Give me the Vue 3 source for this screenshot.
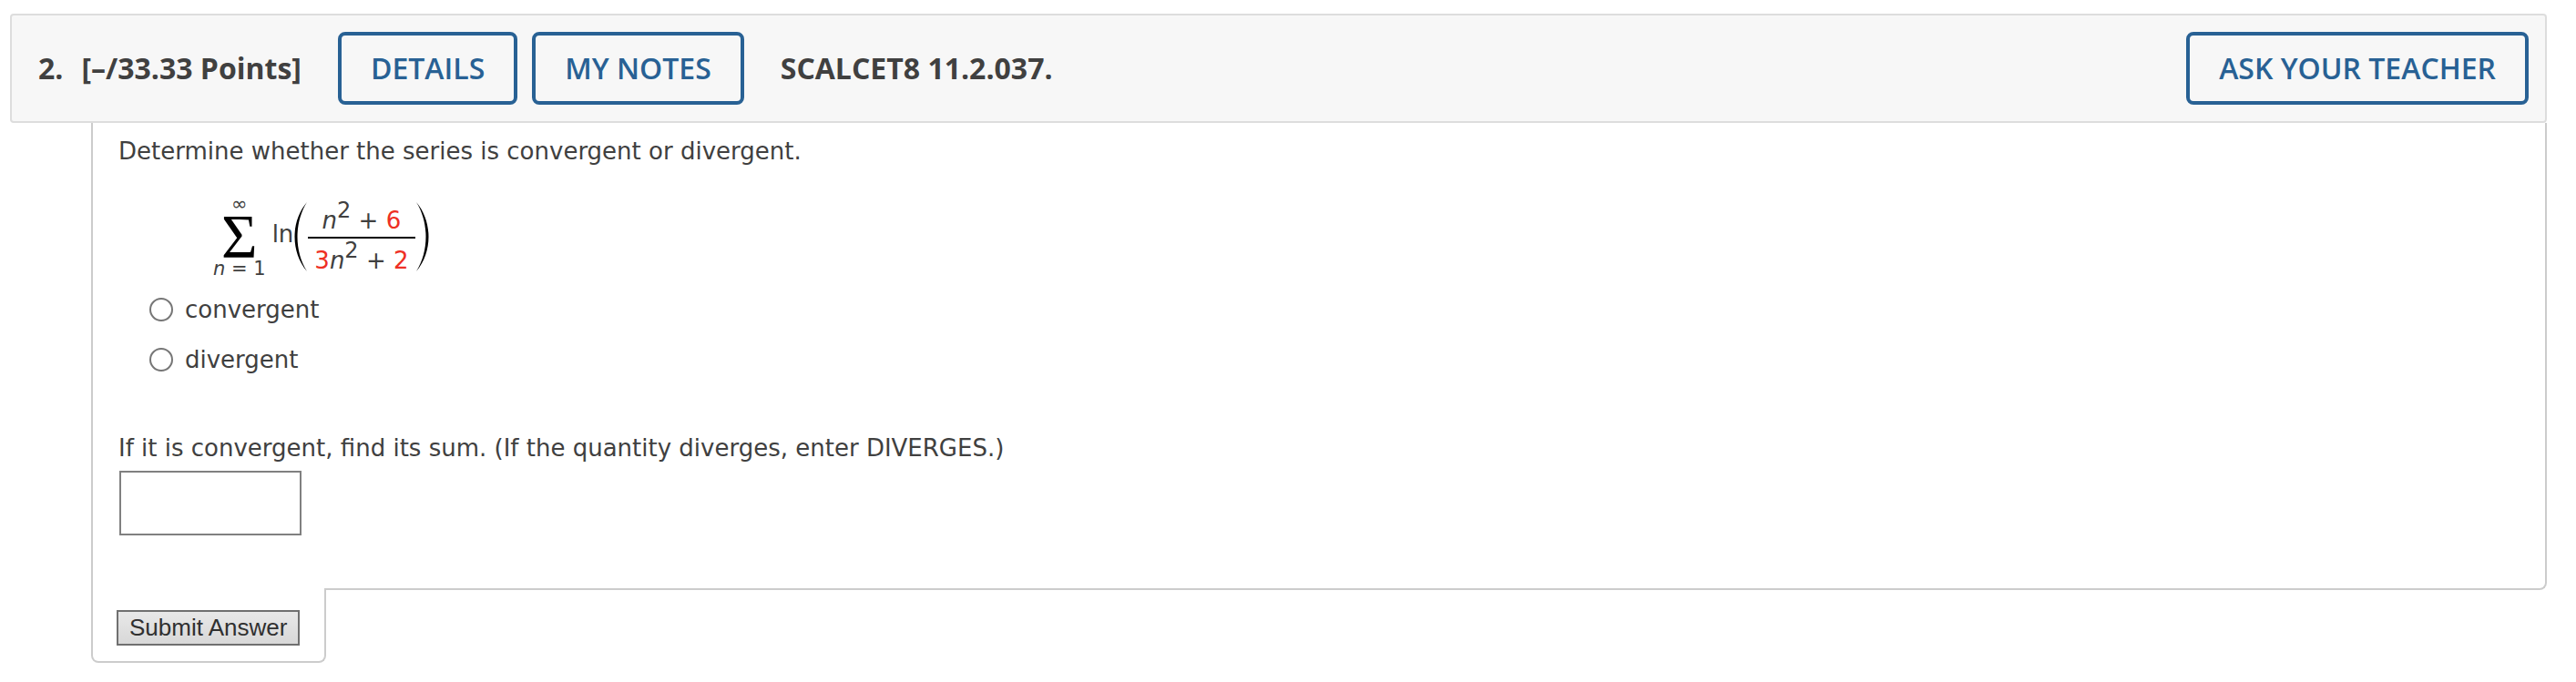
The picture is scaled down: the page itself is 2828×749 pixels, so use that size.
<script setup>
import { ref } from 'vue';

const choice = ref('');
const answer = ref('');
const options = ['convergent', 'divergent'];
</script>

<template>
  <main class="question">
    <header class="question-header">
      <span class="number">2.</span>
      <span class="points">[–/33.33 Points]</span>
      <div class="header-actions">
        <button type="button" class="header-button">DETAILS</button>
        <button type="button" class="header-button">MY NOTES</button>
      </div>
      <span class="source">SCALCET8 11.2.037.</span>
      <button type="button" class="header-button ask-button">ASK YOUR TEACHER</button>
    </header>

    <form class="question-form" @submit.prevent>
      <div class="question-body">
        <p class="prompt">Determine whether the series is convergent or divergent.</p>

        <div class="formula">
          <div class="sum">
            <span class="sum-upper">∞</span>
            <span class="sum-sign">Σ</span>
            <span class="sum-lower"><i>n</i> = 1</span>
          </div>
          <span class="ln">ln</span>
          <svg class="paren" viewBox="0 0 16 78" aria-hidden="true">
            <path d="M15 1C-3 22 -3 56 15 77C1 55 1 23 15 1Z" />
          </svg>
          <div class="fraction">
            <div class="numerator"><i>n</i><sup>2</sup> + <span class="value">6</span></div>
            <div class="denominator"><span class="value">3</span><i>n</i><sup>2</sup> + <span class="value">2</span></div>
          </div>
          <svg class="paren" viewBox="0 0 16 78" aria-hidden="true">
            <path d="M1 1C19 22 19 56 1 77C15 55 15 23 1 1Z" />
          </svg>
        </div>

        <div class="options">
          <label v-for="option in options" :key="option" class="option">
            <input type="radio" name="series" :value="option" v-model="choice">
            <span>{{ option }}</span>
          </label>
        </div>

        <label class="prompt" for="sum-answer">If it is convergent, find its sum. (If the quantity diverges, enter DIVERGES.)</label>
        <input id="sum-answer" v-model="answer" type="text" class="answer">
      </div>

      <div class="submit-tab">
        <button type="submit" class="submit-button">Submit Answer</button>
      </div>
    </form>
  </main>
</template>

<style>
body {
  background: #ffffff;
}
</style>

<style scoped>
.question {
  padding: 15px 32px 19px 11px;
  color: #404040;
  font-family: Verdana, 'DejaVu Sans', sans-serif;
  font-size: 26px;
  line-height: 32px;
}

.question-header {
  display: flex;
  align-items: center;
  padding: 18px;
  padding-left: 29px;
  background: #f7f7f7;
  border: 2px solid #dddddd;
  border-radius: 4px;
  font-family: 'Open Sans', sans-serif;
  font-size: 32px;
  font-weight: 700;
  line-height: 40px;
}

.points {
  margin-left: 20px;
}

.header-actions {
  display: flex;
  gap: 16px;
  margin: 0 40px;
}

.header-button {
  padding: 16px 32px;
  background: transparent;
  border: 4px solid #286194;
  border-radius: 8px;
  color: #286194;
  font-family: inherit;
  font-size: 32px;
  font-weight: 600;
  line-height: 40px;
  cursor: pointer;
}

.ask-button {
  margin-left: auto;
}

.question-form {
  margin-left: 89px;
}

.question-body {
  padding: 15px 28px 58px;
  border: 2px solid #cccccc;
  border-top: none;
  border-bottom-right-radius: 8px;
}

.prompt {
  display: block;
  margin: 0;
}

.formula {
  display: flex;
  align-items: center;
  height: 96px;
  margin: 30px 0 0 104px;
}

.sum {
  display: flex;
  flex-direction: column;
  align-items: center;
  font-size: 21px;
  line-height: 26px;
}

.sum-upper {
  line-height: 24px;
}

.sum-sign {
  color: #000000;
  font-family: 'Liberation Serif', serif;
  font-size: 68px;
  line-height: 46px;
}

.ln {
  margin-left: 7px;
  padding-bottom: 6px;
}

.paren {
  width: 16px;
  height: 78px;
}

.fraction {
  text-align: center;
  line-height: 36px;
}

.numerator {
  padding: 8px 7px 0;
  border-bottom: 2px solid #000000;
}

.denominator {
  padding: 6px 7px 0;
}

.fraction sup {
  font-size: 24px;
  line-height: 0;
  vertical-align: 12px;
}

.value {
  color: #ee2f24;
}

.options {
  display: grid;
  gap: 23px;
  margin: 16px 0 65px 34px;
}

.option {
  display: flex;
  align-items: center;
  gap: 13px;
}

.option input {
  appearance: none;
  width: 26px;
  height: 26px;
  margin: 0;
  background: #ffffff;
  border: 2px solid #767676;
  border-radius: 50%;
}

.option input:checked {
  background: #286194;
  box-shadow: inset 0 0 0 4px #ffffff;
}

.answer {
  display: block;
  box-sizing: border-box;
  width: 200px;
  height: 71px;
  margin: 9px 0 0 1px;
  padding: 4px 8px;
  border: 2px solid #808080;
  color: inherit;
  font: inherit;
}

.submit-tab {
  position: relative;
  width: fit-content;
  margin-top: -2px;
  padding: 24px 27px 17px 26px;
  background: #ffffff;
  border: 2px solid #cccccc;
  border-top: none;
  border-radius: 0 0 8px 8px;
}

.submit-button {
  display: block;
  padding: 2px 12px;
  background: linear-gradient(#e8e8e8, #d8d8d8);
  border: 2px solid #707070;
  color: #303030;
  font-family: Arial, 'Liberation Sans', sans-serif;
  font-size: 26px;
  line-height: 31px;
  cursor: pointer;
}
</style>
